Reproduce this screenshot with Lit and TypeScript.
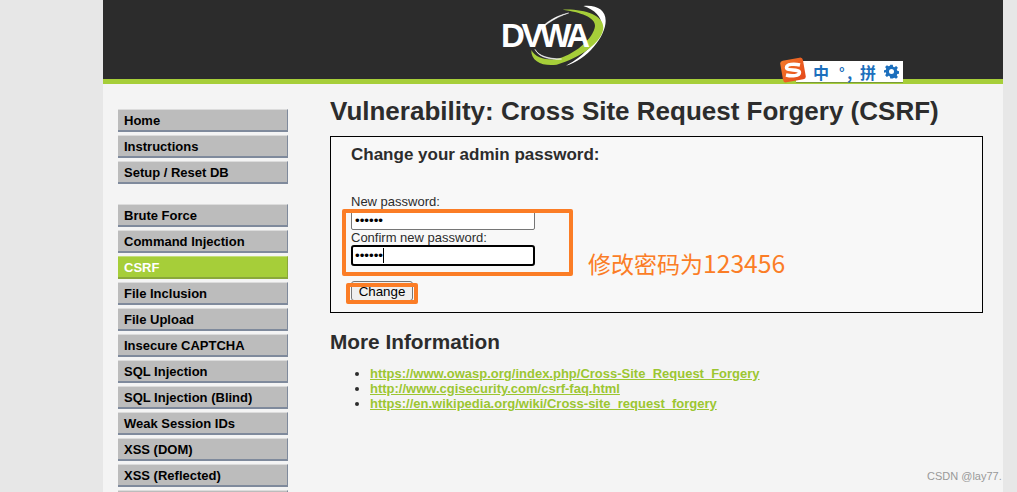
import { LitElement, html, css, svg } from "lit";
import { customElement } from "lit/decorators.js";

const GROUP1 = ["Home", "Instructions", "Setup / Reset DB"];
const GROUP2 = ["Brute Force", "Command Injection", "CSRF", "File Inclusion", "File Upload", "Insecure CAPTCHA", "SQL Injection", "SQL Injection (Blind)", "Weak Session IDs", "XSS (DOM)", "XSS (Reflected)", ""];
const LINKS = [
  "https://www.owasp.org/index.php/Cross-Site_Request_Forgery",
  "http://www.cgisecurity.com/csrf-faq.html",
  "https://en.wikipedia.org/wiki/Cross-site_request_forgery",
];

@customElement("app-root")
export class AppRoot extends LitElement {
  static styles = css`
    :host { display: block; width: 1017px; height: 492px; overflow: hidden; background: #e7e7e7; position: relative; font-family: "Liberation Sans", Arial, sans-serif; color: #2c2c2c; }
    .page { margin-left: 103px; width: 900px; height: 492px; background: #f4f4f4; overflow: hidden; }
    .header { height: 79px; background: #2c2c2c; border-bottom: 5px solid #a6ce39; display: flex; justify-content: center; }
    .logo { width: 200px; height: 79px; display: block; }
    .body { display: flex; }
    .side { width: 170px; margin-left: 15px; padding-top: 25px; flex: none; }
    .group { display: flex; flex-direction: column; gap: 3px; margin-bottom: 20px; }
    .item { height: 23px; flex: none; box-sizing: border-box; background: #bcbcbc; border-top: 1px solid #dcdcdc; border-right: 1px solid #7f8a9c; border-bottom: 2px solid #7f8a9c; padding-left: 6px; font-size: 13px; font-weight: 700; line-height: 22px; color: #000; white-space: nowrap; }
    .item.on { background: #a6ce39; color: #fff; border-top-color: #c4de7a; border-bottom-color: #8aa83a; border-right-color: #8aa83a; }
    .main { margin-left: 42px; width: 653px; }
    h1 { margin: 11px 0 0; font-size: 26px; line-height: 32px; font-weight: 700; white-space: nowrap; }
    .box { margin-top: 9px; height: 177px; box-sizing: border-box; border: 1px solid #000; background: #f8f8f8; padding: 8px 20px; }
    h3 { margin: 0; font-size: 17px; line-height: 20px; font-weight: 700; }
    .lbl { font-size: 13px; line-height: 15px; }
    .lbl.first { margin-top: 29px; margin-bottom: 2px; }
    .inp { width: 184px; height: 19px; box-sizing: border-box; background: #fff; border: 1px solid #767676; border-radius: 2px; display: flex; align-items: center; padding-left: 3px; font-size: 13.33px; color: #000; line-height: 1; }
    .inp.focus { height: 21px; border: 2px solid #000; border-radius: 3px; padding-left: 2px; }
    .caret { width: 1px; height: 15px; background: #000; }
    .btn { margin-top: 15px; width: 62px; height: 20px; box-sizing: border-box; border: 1px solid #767676; border-radius: 3px; background: #efefef; font-size: 13.33px; color: #000; display: flex; align-items: center; justify-content: center; }
    h2 { margin: 17px 0 0; font-size: 20.8px; line-height: 24px; font-weight: 700; }
    ul { margin: 12px 0 0; padding: 0 0 0 40px; font-size: 13px; line-height: 15px; }
    a { color: #9cc631; font-weight: 700; text-decoration: underline; }
    .mark { position: absolute; border: 4px solid #fb7d26; border-radius: 2px; box-sizing: border-box; }
    .m1 { left: 342px; top: 209px; width: 231px; height: 67px; }
    .m2 { left: 346px; top: 283px; width: 72px; height: 21px; }
    .note { position: absolute; left: 588px; top: 247px; font-family: "Noto Sans CJK SC", sans-serif; font-size: 23px; line-height: 30px; color: #fb7d26; white-space: nowrap; }
    .num { font-size: 24.7px; }
    .ime { position: absolute; left: 780px; top: 57px; width: 123px; height: 26px; }
    .ime-bar { position: absolute; left: 16px; top: 4px; width: 107px; height: 21px; background: #fff; box-shadow: 0 1px 0 #7a9a3a; }
    .ime-s { position: absolute; left: 0; top: 0; width: 26px; height: 26px; }
    .ime-t { position: absolute; top: 4px; font-family: "Noto Sans CJK SC", sans-serif; font-size: 16px; line-height: 22px; color: #1c6fbd; font-weight: 700; white-space: nowrap; }
    .ime-g { position: absolute; left: 104px; top: 7px; width: 15px; height: 15px; }
    .wm { position: absolute; left: 927px; top: 469px; font-size: 11px; line-height: 14px; color: #999; white-space: nowrap; }
  `;

  logo() {
    return svg`
      <g transform="translate(440 0) scale(.33333)">
        <path d="M430 18 C 470 14 497 30 497 62 C 497 110 440 180 378 197 C 430 170 482 115 484 75 C 485 50 465 30 430 18 Z" fill="#fff"/>
        <path d="M368 29 C 430 26 490 45 490 82 C 490 125 420 175 350 194 C 310 200 272 185 274 150 C 285 172 315 180 345 178 C 400 168 462 115 465 78 C 467 52 420 36 368 29 Z" fill="#a6ce39"/>
        <path d="M386 39 C 340 48 296 80 287 112 C 296 84 345 52 386 39 Z" fill="#fff" stroke="#fff" stroke-width="1.500"/>
        <path d="M285 148 C 296 168 325 176 365 177 C 330 181 296 172 285 148 Z" fill="#fff" stroke="#fff" stroke-width="1.500"/>
      </g>
      <text x="501" y="47" font-family="Liberation Sans, Arial, sans-serif" font-weight="700" font-size="33" letter-spacing="-3.300" fill="#fff">DVWA</text>
    `;
  }

  render() {
    return html`
      <div class="page">
        <div class="header">
          <svg class="logo" viewBox="453 0 200 79">${this.logo()}</svg>
        </div>
        <div class="body">
          <nav class="side">
            <div class="group">${GROUP1.map((t) => html`<div class="item">${t}</div>`)}</div>
            <div class="group">${GROUP2.map((t) => html`<div class="item ${t === "CSRF" ? "on" : ""}">${t}</div>`)}</div>
          </nav>
          <main class="main">
            <h1>Vulnerability: Cross Site Request Forgery (CSRF)</h1>
            <div class="box">
              <h3>Change your admin password:</h3>
              <div class="lbl first">New password:</div>
              <div class="inp">••••••</div>
              <div class="lbl">Confirm new password:</div>
              <div class="inp focus">••••••<span class="caret"></span></div>
              <div class="btn">Change</div>
            </div>
            <h2>More Information</h2>
            <ul>${LINKS.map((l) => html`<li><a>${l}</a></li>`)}</ul>
          </main>
        </div>
      </div>
      <div class="mark m1"></div>
      <div class="mark m2"></div>
      <div class="note">修改密码为<span class="num">123456</span></div>
      <div class="ime">
        <div class="ime-bar"></div>
        <svg class="ime-s" viewBox="0 0 26 26">
          <defs><linearGradient id="sg" x1="0" y1="0" x2="1" y2="1"><stop offset="0" stop-color="#f47a2a"/><stop offset="1" stop-color="#e4471a"/></linearGradient></defs>
          <rect x="1.500" y="2" width="23" height="22" rx="3" fill="url(#sg)" transform="rotate(-10 13 13)"/>
          <path d="M20 8 C 14 6.500 6.500 7 6.500 10.500 C 6.500 14.500 19.500 11.500 19.500 15.500 C 19.500 19 12 19.500 6 18" fill="none" stroke="#fff" stroke-width="3.400"/>
        </svg>
        <span class="ime-t" style="left:33px">中</span>
        <span class="ime-t" style="left:59px;font-size:14px">°</span>
        <span class="ime-t" style="left:67px">,</span>
        <span class="ime-t" style="left:80px">拼</span>
        <svg class="ime-g" viewBox="0 0 24 24"><path fill="#1c6fbd" fill-rule="evenodd" d="M10 1h4l.6 3.200 2 .9L19.400 3.300l2.800 2.800-1.800 2.800.9 2 3.200.6v4l-3.200.6-.9 2 1.800 2.800-2.800 2.800-2.800-1.800-2 .9L14 23h-4l-.6-3.200-2-.9-2.800 1.800-2.800-2.800 1.800-2.800-.9-2L-.5 14v-4l3.200-.6.900-2-1.800-2.800 2.800-2.800 2.800 1.800 2-.9zM12 8a4 4 0 100 8 4 4 0 000-8z"/></svg>
      </div>
      <div class="wm">CSDN @lay77.</div>
    `;
  }
}
